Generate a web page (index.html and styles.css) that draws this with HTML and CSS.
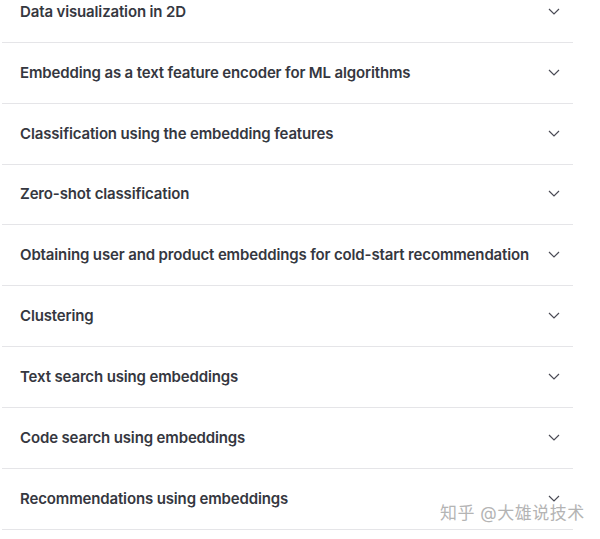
FILE: index.html
```html
<!DOCTYPE html>
<html lang="en">
<head>
	<meta charset="UTF-8">
	<meta name="viewport" content="width=device-width, initial-scale=1.0">
	<title>Use cases</title>

	<link rel="stylesheet" href="styles.css">
</head>
<body>
	<div class="content">
		<div class="accordion">
			<div class="item"><span>Data visualization in 2D</span><svg class="chev" viewBox="0 0 12 7"><path d="M1 1l5 5 5-5"/></svg></div>
			<div class="item"><span>Embedding as a text feature encoder for ML algorithms</span><svg class="chev" viewBox="0 0 12 7"><path d="M1 1l5 5 5-5"/></svg></div>
			<div class="item"><span>Classification using the embedding features</span><svg class="chev" viewBox="0 0 12 7"><path d="M1 1l5 5 5-5"/></svg></div>
			<div class="item"><span>Zero-shot classification</span><svg class="chev" viewBox="0 0 12 7"><path d="M1 1l5 5 5-5"/></svg></div>
			<div class="item"><span>Obtaining user and product embeddings for cold-start recommendation</span><svg class="chev" viewBox="0 0 12 7"><path d="M1 1l5 5 5-5"/></svg></div>
			<div class="item"><span>Clustering</span><svg class="chev" viewBox="0 0 12 7"><path d="M1 1l5 5 5-5"/></svg></div>
			<div class="item"><span>Text search using embeddings</span><svg class="chev" viewBox="0 0 12 7"><path d="M1 1l5 5 5-5"/></svg></div>
			<div class="item"><span>Code search using embeddings</span><svg class="chev" viewBox="0 0 12 7"><path d="M1 1l5 5 5-5"/></svg></div>
			<div class="item"><span>Recommendations using embeddings</span><svg class="chev" viewBox="0 0 12 7"><path d="M1 1l5 5 5-5"/></svg></div>
		</div>
		<div class="watermark">知乎 @大雄说技术</div>
	</div>
</body>
</html>
```

FILE: styles.css
```css
body {
	margin: 0;
	background: #fff;
	font-family: Inter, "Noto Sans CJK SC", sans-serif;
	overflow: hidden;
}
.content {
	display: flow-root;
	position: relative;
	height: 539px;
}
.content .accordion {
	margin: -18px 0 0 2px;
	width: 571px;
}
.content .item {
	display: flex;
	align-items: center;
	justify-content: space-between;
	height: 58.85px;
	padding: 0 13px 1px 18px;
	box-sizing: content-box;
	border-bottom: 1px solid #e5e5e8;
	font-size: 15px;
	font-weight: 600;
	letter-spacing: -0.14px;
	color: #353740;
}
.content .chev {
	flex-shrink: 0;
	width: 12px;
	height: 7px;
	fill: none;
	stroke: #4a4b55;
	stroke-width: 1.2;
}
.content .watermark {
	position: absolute;
	left: 440px;
	top: 505px;
	font-size: 17px;
	line-height: 1;
	color: #b4b4b4;
	letter-spacing: 0.5px;
	text-shadow: 0 0 1px #fff;
}
```
